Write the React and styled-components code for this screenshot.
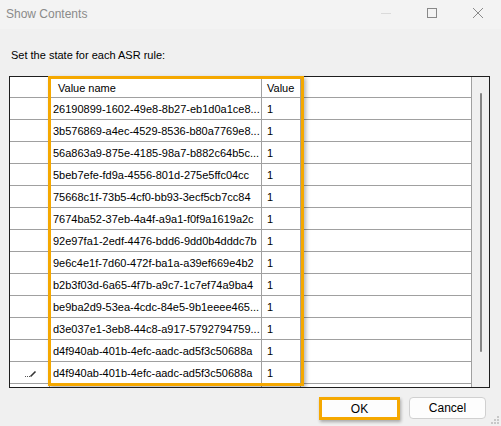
import React from 'react';
import styled, { createGlobalStyle } from 'styled-components';

const rows = [
  '26190899-1602-49e8-8b27-eb1d0a1ce8...',
  '3b576869-a4ec-4529-8536-b80a7769e8...',
  '56a863a9-875e-4185-98a7-b882c64b5c...',
  '5beb7efe-fd9a-4556-801d-275e5ffc04cc',
  '75668c1f-73b5-4cf0-bb93-3ecf5cb7cc84',
  '7674ba52-37eb-4a4f-a9a1-f0f9a1619a2c',
  '92e97fa1-2edf-4476-bdd6-9dd0b4dddc7b',
  '9e6c4e1f-7d60-472f-ba1a-a39ef669e4b2',
  'b2b3f03d-6a65-4f7b-a9c7-1c7ef74a9ba4',
  'be9ba2d9-53ea-4cdc-84e5-9b1eeee465...',
  'd3e037e1-3eb8-44c8-a917-5792794759...',
  'd4f940ab-401b-4efc-aadc-ad5f3c50688a',
  'd4f940ab-401b-4efc-aadc-ad5f3c50688a',
];

function App() {
  return (
    <Window>
      <GlobalStyle />
      <TitleBar>
        <Title>Show Contents</Title>
        <Controls>
          <Ctl>
            <svg width="12" height="12" viewBox="0 0 12 12">
              <line x1="1" y1="6.5" x2="11" y2="6.5" stroke="#dadada" strokeWidth="1" />
            </svg>
          </Ctl>
          <Ctl>
            <svg width="12" height="12" viewBox="0 0 12 12">
              <rect x="1.5" y="1.5" width="9" height="9" fill="none" stroke="#888" strokeWidth="1" />
            </svg>
          </Ctl>
          <Ctl>
            <svg width="12" height="12" viewBox="0 0 12 12">
              <path d="M1 1 L11 11 M11 1 L1 11" stroke="#8a8a8a" strokeWidth="1" />
            </svg>
          </Ctl>
        </Controls>
      </TitleBar>
      <Body>
        <Label>Set the state for each ASR rule:</Label>
        <GridBox>
          <Table>
            <Row $head>
              <Cell />
              <Cell $pad={8}>Value name</Cell>
              <Cell $pad={5}>Value</Cell>
              <Cell />
            </Row>
            {rows.map((r, i) => (
              <Row key={i}>
                <Cell $rowhead>
                  {i === rows.length - 1 && (
                    <svg width="12" height="10" viewBox="0 0 12 10">
                      <rect x="0" y="8" width="1" height="1" fill="#555" />
                      <rect x="2" y="8" width="1" height="1" fill="#555" />
                      <rect x="4" y="8" width="1" height="1" fill="#555" />
                      <path d="M5.5 8.5 L10.5 3.5" stroke="#333" strokeWidth="1.6" />
                    </svg>
                  )}
                </Cell>
                <Cell>{r}</Cell>
                <Cell $pad={5}>1</Cell>
                <Cell />
              </Row>
            ))}
            <Row>
              <Cell $rowhead />
              <Cell />
              <Cell />
              <Cell />
            </Row>
            <Highlight $top={-1} $left={38} $width={256} $height={310} />
          </Table>
          <ScrollBar>
            <Thumb />
          </ScrollBar>
        </GridBox>
        <Buttons>
          <Button $primary>OK</Button>
          <Button>Cancel</Button>
        </Buttons>
        <Grip>
          <svg width="9" height="9" viewBox="0 0 9 9">
            <rect x="6" y="0" width="2" height="2" fill="#c8c8c8" />
            <rect x="3" y="3" width="2" height="2" fill="#c8c8c8" />
            <rect x="6" y="3" width="2" height="2" fill="#c8c8c8" />
            <rect x="0" y="6" width="2" height="2" fill="#c8c8c8" />
            <rect x="3" y="6" width="2" height="2" fill="#c8c8c8" />
            <rect x="6" y="6" width="2" height="2" fill="#c8c8c8" />
          </svg>
        </Grip>
      </Body>
    </Window>
  );
}

const GlobalStyle = createGlobalStyle`
  body {
    margin: 0;
    background: #f0f0f0;
    font-family: "Liberation Sans", Arial, sans-serif;
  }
`;

const Window = styled.div`
  width: 501px;
  height: 426px;
  display: flex;
  flex-direction: column;
  background: #f0f0f0;
  overflow: hidden;
`;

const TitleBar = styled.div`
  height: 29px;
  background: #f3f3f3;
  display: flex;
  align-items: center;
  justify-content: space-between;
  padding-left: 6px;
`;

const Title = styled.div`
  font-size: 12px;
  color: #8a8a8a;
  margin-top: -1px;
`;

const Controls = styled.div`
  display: flex;
  align-items: center;
  margin-top: -3px;
`;

const Ctl = styled.div`
  width: 46px;
  height: 29px;
  display: flex;
  align-items: center;
  justify-content: center;
`;

const Body = styled.div`
  flex: 1;
  position: relative;
  padding: 0 11px 0 9px;
`;

const Label = styled.div`
  font-size: 11px;
  color: #000;
  margin-top: 19px;
  padding-left: 2px;
  height: 15px;
  line-height: 15px;
`;

const GridBox = styled.div`
  margin-top: 13px;
  height: 312px;
  box-sizing: border-box;
  border: 1px solid #1e1e1e;
  background: #fff;
  display: flex;
`;

const Table = styled.div`
  flex: 1;
  position: relative;
  height: 310px;
  clip-path: inset(-6px -6px 0 -6px);
`;

const Row = styled.div`
  display: grid;
  grid-template-columns: 40px 212px 39px 1fr;
  height: ${p => (p.$head ? 21 : 22)}px;
  box-sizing: border-box;
  border-bottom: 1px solid #a0a0a0;
  font-size: 11px;
  color: #000;
`;

const Cell = styled.div`
  border-right: 1px solid #a0a0a0;
  display: flex;
  align-items: center;
  justify-content: ${p => (p.$rowhead ? 'center' : 'flex-start')};
  padding-left: ${p => p.$pad ?? 3}px;
  padding-top: 1px;
  overflow: hidden;
  white-space: nowrap;
`;

const Highlight = styled.div`
  position: absolute;
  top: ${p => p.$top}px;
  left: ${p => p.$left}px;
  width: ${p => p.$width}px;
  height: ${p => p.$height}px;
  box-sizing: border-box;
  border: 3px solid #f5a800;
  box-shadow: 2px 2px 4px rgba(0, 0, 0, 0.3);
  pointer-events: none;
`;

const ScrollBar = styled.div`
  width: 17px;
  background: #f0f0f0;
  display: flex;
  justify-content: center;
  padding-top: 16px;
`;

const Thumb = styled.div`
  width: 2px;
  height: 259px;
  background: #858585;
  border-radius: 1px;
`;

const Buttons = styled.div`
  display: flex;
  justify-content: flex-end;
  gap: 9px;
  margin-top: 9px;
  padding-right: 4px;
`;

const Button = styled.div`
  width: 77px;
  height: 22px;
  box-sizing: border-box;
  background: #fdfdfd;
  border: 1px solid #d0d0d0;
  border-radius: 4px;
  display: flex;
  align-items: center;
  justify-content: center;
  font-size: 12px;
  color: #000;
  ${p =>
    p.$primary &&
    `
    border-radius: 0;
    border: 3px solid #f5a800;
    width: 81px;
    height: 23px;
    box-shadow: 1px 2px 3px rgba(0,0,0,0.3);
  `}
`;

const Grip = styled.div`
  position: absolute;
  right: 1px;
  bottom: 1px;
  line-height: 0;
`;

export default App;
